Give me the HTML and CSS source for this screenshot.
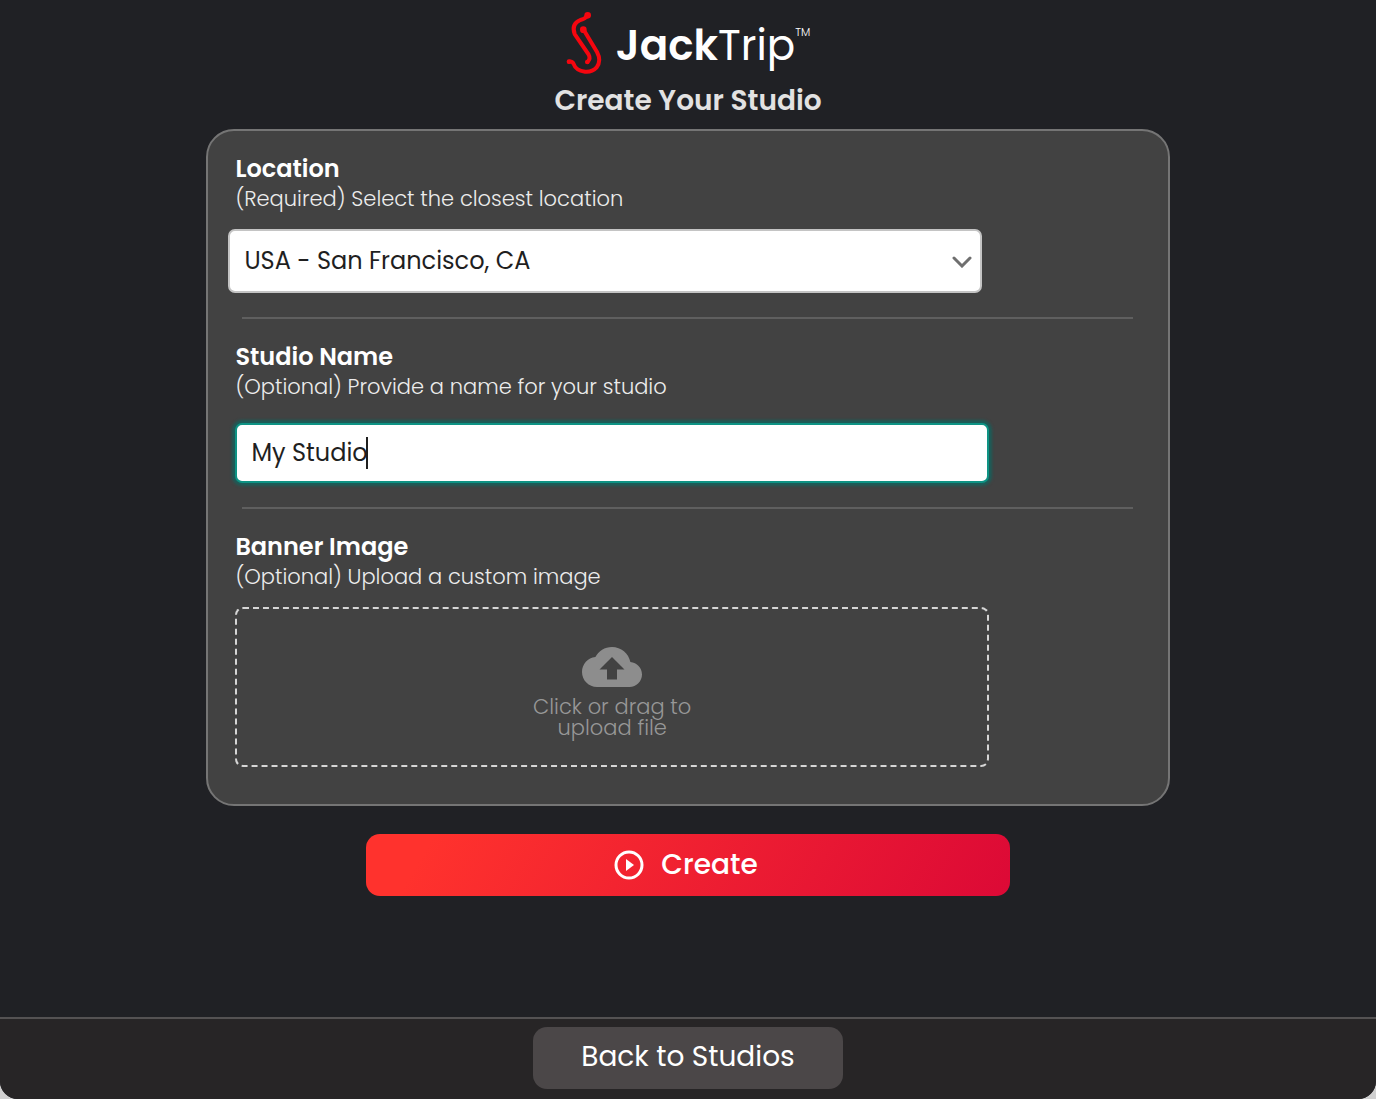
FILE: index.html
```
<!DOCTYPE html>
<html lang="en">
<head>
    <meta charset="UTF-8">
    <meta name="viewport" content="width=device-width, initial-scale=1.0">
    <title>JackTrip</title>
    <link rel="stylesheet" href="styles.css">
</head>
<body>
    <div class="window">
        <header class="header">
            <div class="logo">
                <svg class="logo-mark" viewBox="0 0 150 222" aria-hidden="true">
                    <g fill="none" stroke="#f5060f" stroke-width="12" stroke-linecap="round">
                        <path d="M80 28 Q74 38 58 42 Q30 54 41 84 L83 146 Q90 158 79 168"/>
                        <path d="M67 70 L108 138 Q122 164 107 184 Q93 199 72 197 Q44 193 38 174 Q34 165 24 167"/>
                    </g>
                    <g fill="#f5060f">
                        <circle cx="80" cy="28" r="10"/>
                        <circle cx="67" cy="71" r="10"/>
                        <circle cx="79" cy="168" r="7"/>
                        <circle cx="24" cy="167" r="7"/>
                    </g>
                </svg>
                <span class="logo-text"><b>Jack</b>Trip<sup>TM</sup></span>
            </div>
            <h1 class="title">Create Your Studio</h1>
        </header>

        <main class="main">
            <form class="form" id="studio-form">
                <div class="card">
                    <section class="field">
                        <label class="field-label" for="location">Location</label>
                        <p class="field-hint">(Required) Select the closest location</p>
                        <div class="select-box">
                            <select class="select" id="location">
                                <option>USA - San Francisco, CA</option>
                            </select>
                            <svg class="chevron" viewBox="0 0 20 12" aria-hidden="true">
                                <path d="M2 2 L10 10 L18 2" fill="none" stroke="#6f6f6f" stroke-width="3" stroke-linecap="round"/>
                            </svg>
                        </div>
                    </section>

                    <section class="field">
                        <label class="field-label" for="name">Studio Name</label>
                        <p class="field-hint">(Optional) Provide a name for your studio</p>
                        <div class="input-box">
                            <input class="input" id="name" type="text" value="My Studio" autofocus>
                            <span class="caret"></span>
                        </div>
                    </section>

                    <section class="field">
                        <label class="field-label" for="banner">Banner Image</label>
                        <p class="field-hint">(Optional) Upload a custom image</p>
                        <label class="dropzone">
                            <input class="file" id="banner" type="file" accept="image/*">
                            <svg class="cloud" viewBox="0 4 24 16" aria-hidden="true">
                                <path fill="#8d8d8d" d="M19.35 10.04C18.67 6.59 15.64 4 12 4 9.11 4 6.6 5.64 5.35 8.04 2.34 8.36 0 10.91 0 14c0 3.31 2.69 6 6 6h13c2.76 0 5-2.24 5-5 0-2.64-2.05-4.78-4.65-4.96zM14 13v4h-4v-4H7l5-5 5 5h-3z"/>
                            </svg>
                            <span class="drop-text">Click or drag to upload file</span>
                        </label>
                    </section>
                </div>

                <button class="create" type="submit">
                    <svg class="play" viewBox="0 0 30 30" aria-hidden="true">
                        <circle cx="15" cy="15" r="13" fill="none" stroke="#fff" stroke-width="3"/>
                        <path d="M12 9 L20 15 L12 21 Z" fill="#fff"/>
                    </svg>
                    Create
                </button>
            </form>
        </main>

        <footer class="footer">
            <button class="back" type="button">Back to Studios</button>
        </footer>
    </div>
</body>
</html>
```
FILE: styles.css
```
* {
    margin: 0;
    padding: 0;
    box-sizing: border-box;
}

body {
    font-family: Poppins, Inter, sans-serif;
    background: #d0d0d0;
    color: #fff;
}

button,
input,
select {
    font-family: inherit;
}

.window {
    min-height: 100vh;
    display: flex;
    flex-direction: column;
    background: #202125;
    border-radius: 0 0 18px 18px;
    overflow: hidden;
}

/* Header */
.header {
    padding-top: 6px;
    text-align: center;
}

.logo {
    display: flex;
    justify-content: center;
    align-items: center;
    gap: 5px;
}

.logo-mark {
    width: 50px;
    height: 74px;
}

.logo-text {
    padding: 5px 5px 0 0;
    font-size: 42px;
    line-height: 60px;
    font-weight: 400;
}

.logo-text b {
    font-weight: 600;
}

.logo-text sup {
    font-size: 11px;
    line-height: 12px;
    font-weight: 300;
    vertical-align: 24px;
}

.title {
    font-size: 28px;
    line-height: 41px;
    font-weight: 600;
    color: #e2e2e2;
}

/* Form */
.main {
    flex: 1;
    padding-top: 8px;
}

.form {
    display: flex;
    flex-direction: column;
    align-items: center;
    gap: 28px;
}

.card {
    width: 70%;
    padding: 22px 35px 37px 27px;
    background: #424242;
    border: 2px solid #757575;
    border-radius: 28px;
}

.field + .field {
    margin-top: 24px;
}

/* Divider line between fields */
.field + .field::before {
    content: '';
    display: block;
    height: 2px;
    margin: 0 0 22px 7px;
    background: #5f5f5f;
}

.field-label {
    display: block;
    font-size: 24px;
    line-height: 32px;
    font-weight: 600;
}

.field-hint {
    font-size: 21px;
    line-height: 28px;
    font-weight: 300;
    color: #ececec;
}

.select-box {
    position: relative;
    width: 84%;
    margin: 16px 0 0 -7px;
}

.select {
    display: block;
    width: 100%;
    height: 64px;
    padding: 0 56px 2px 14px;
    appearance: none;
    background: #fff;
    border: 2px solid #c4c4c4;
    border-radius: 7px;
    font-size: 24px;
    color: #1f1f1f;
}

.chevron {
    position: absolute;
    right: 10px;
    top: 27px;
    width: 20px;
    height: 12px;
    pointer-events: none;
}

.input-box {
    position: relative;
    width: 84%;
    margin-top: 22px;
}

.input {
    display: block;
    width: 100%;
    height: 60px;
    padding: 0 14px 2px;
    background: #fff;
    border: 2px solid #0e9384;
    border-radius: 7px;
    outline: none;
    box-shadow: 0 0 3px 3px #1b5d59;
    font-size: 24px;
    color: #1f1f1f;
    caret-color: transparent;
}

.caret {
    position: absolute;
    left: 131px;
    top: 14px;
    width: 2px;
    height: 32px;
    background: #1f1f1f;
}

.dropzone {
    display: flex;
    flex-direction: column;
    align-items: center;
    width: 84%;
    height: 160px;
    margin-top: 16px;
    padding-top: 38px;
    gap: 9px;
    border: 2px dashed #d6d6d6;
    border-radius: 8px;
    cursor: pointer;
}

.drop-text {
    max-width: 180px;
    font-size: 21px;
    line-height: 21px;
    font-weight: 300;
    text-align: center;
    color: #979797;
}

.file {
    position: absolute;
    opacity: 0;
    width: 1px;
    height: 1px;
}

.cloud {
    width: 60px;
    height: 40px;
}

.create {
    display: flex;
    justify-content: center;
    align-items: center;
    gap: 17px;
    width: 644px;
    max-width: 90%;
    height: 62px;
    padding-right: 4px;
    border: none;
    border-radius: 14px;
    background: linear-gradient(120deg, #ff322d 10%, #dc0936 100%);
    font-size: 28px;
    font-weight: 500;
    color: #fff;
    cursor: pointer;
}

.play {
    width: 30px;
    height: 30px;
}

/* Footer */
.footer {
    display: flex;
    justify-content: center;
    padding: 8px 0 10px;
    background: #272526;
    border-top: 2px solid #545253;
}

.back {
    width: 310px;
    height: 62px;
    padding-bottom: 2px;
    border: none;
    border-radius: 14px;
    background: #4b4748;
    font-size: 28px;
    font-weight: 400;
    color: #fff;
    cursor: pointer;
}
```
